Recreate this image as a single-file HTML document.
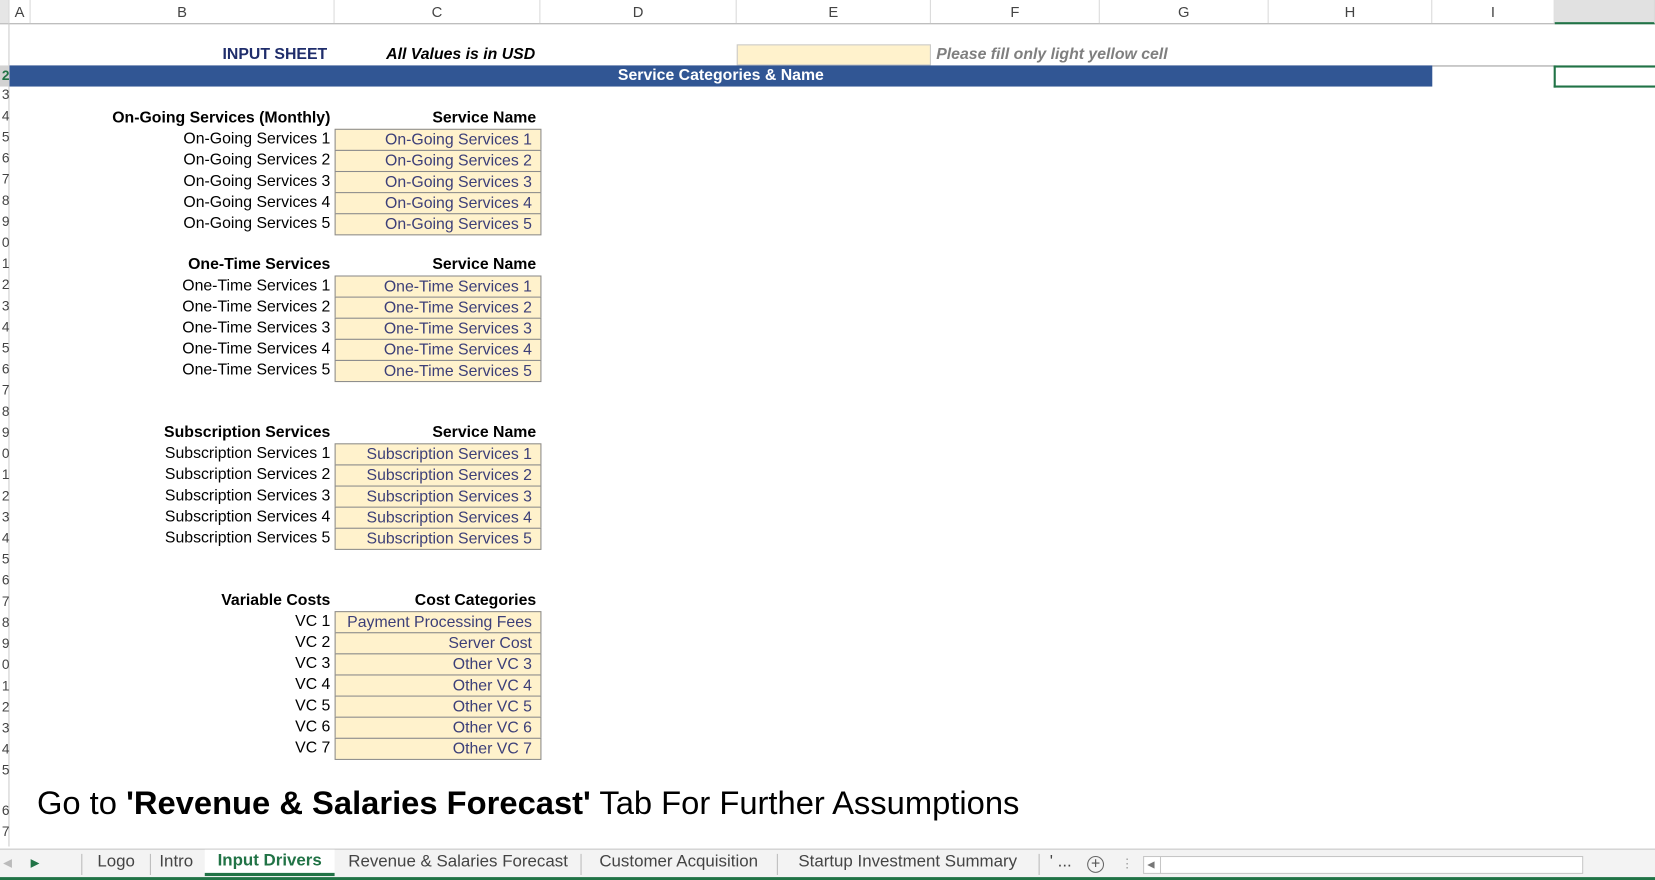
<!DOCTYPE html>
<html><head><meta charset="utf-8"><style>
html,body{margin:0;padding:0;background:#fff;overflow:hidden;width:1655px;height:880px}
#w{position:absolute;left:0;top:0;width:1568px;height:834px;transform:scale(1.05548);transform-origin:0 0;font-family:"Liberation Sans",Arial,sans-serif;color:#000}
.a{position:absolute;white-space:nowrap;font-size:15px;line-height:20px}
.r{text-align:right}
.b{font-weight:bold}
.y{position:absolute;background:#FFF2CC;border:1px solid #8c8c8c;box-sizing:border-box;height:21px;color:#3c3f78;font-size:15px;line-height:19px;text-align:right;padding-right:8px;white-space:nowrap}
.h{position:absolute;top:0;height:22px;line-height:22px;font-size:14px;color:#444;text-align:center;border-right:1px solid #dadada;box-sizing:border-box}
.rn{position:absolute;left:0;width:9px;font-size:13px;color:#444;overflow:hidden;text-align:right;direction:rtl}
.tab{position:absolute;top:805px;height:26px;line-height:24px;font-size:16px;color:#444;text-align:center}
.sep{position:absolute;top:809px;width:1px;height:20px;background:#bbb}
</style></head><body><div id="w">
<div style="position:absolute;left:0;top:0;width:1568px;height:22px;background:#fff;border-bottom:1px solid #ababab"></div>
<div class="h" style="left:0;width:9px;background:#e6e6e6"></div>
<div class="h" style="left:9px;width:20px">A</div>
<div class="h" style="left:29px;width:288px">B</div>
<div class="h" style="left:317px;width:195px">C</div>
<div class="h" style="left:512px;width:186px">D</div>
<div class="h" style="left:698px;width:184px">E</div>
<div class="h" style="left:882px;width:160px">F</div>
<div class="h" style="left:1042px;width:160px">G</div>
<div class="h" style="left:1202px;width:155px">H</div>
<div class="h" style="left:1357px;width:116px">I</div>
<div class="h" style="left:1473px;width:95px;background:#e1e1e1;border-bottom:2px solid #217346;height:23px"></div>
<div style="position:absolute;left:8px;top:22px;width:1px;height:780px;background:#ccc"></div>
<div class="a b r" style="left:29px;width:281px;top:42px;color:#1f2d6b">INPUT SHEET</div>
<div class="a b r" style="left:317px;width:190px;top:42px;font-style:italic">All Values is in USD</div>
<div style="position:absolute;left:698px;top:42px;width:184px;height:20px;background:#FFF2CC;border:1px solid #c9c9c9;box-sizing:border-box"></div>
<div class="a b" style="left:887px;top:42px;font-style:italic;color:#7f7f7f">Please fill only light yellow cell</div>
<div style="position:absolute;left:9px;top:62px;width:1559px;height:1px;background:#9e9e9e"></div>
<div class="a b" style="left:9px;top:62px;width:1348px;height:20px;background:#315694;color:#fff;text-align:center">Service Categories &amp; Name</div>
<div style="position:absolute;left:1472px;top:62px;width:96px;height:21px;border:2px solid #217346;border-right:none;box-sizing:border-box"></div>
<div class="rn b" style="top:62px;color:#217346;background:#d2d2d2;line-height:20px">2</div>
<div class="rn" style="top:82px">3</div><div class="rn" style="top:102px">4</div><div class="rn" style="top:122px">5</div><div class="rn" style="top:142px">6</div><div class="rn" style="top:162px">7</div><div class="rn" style="top:182px">8</div><div class="rn" style="top:202px">9</div><div class="rn" style="top:222px">0</div><div class="rn" style="top:242px">1</div><div class="rn" style="top:262px">2</div><div class="rn" style="top:282px">3</div><div class="rn" style="top:302px">4</div><div class="rn" style="top:322px">5</div><div class="rn" style="top:342px">6</div><div class="rn" style="top:362px">7</div><div class="rn" style="top:382px">8</div><div class="rn" style="top:402px">9</div><div class="rn" style="top:422px">0</div><div class="rn" style="top:442px">1</div><div class="rn" style="top:462px">2</div><div class="rn" style="top:482px">3</div><div class="rn" style="top:502px">4</div><div class="rn" style="top:522px">5</div><div class="rn" style="top:542px">6</div><div class="rn" style="top:562px">7</div><div class="rn" style="top:582px">8</div><div class="rn" style="top:602px">9</div><div class="rn" style="top:622px">0</div><div class="rn" style="top:642px">1</div><div class="rn" style="top:662px">2</div><div class="rn" style="top:682px">3</div><div class="rn" style="top:702px">4</div><div class="rn" style="top:722px">5</div><div class="rn" style="top:760px">6</div><div class="rn" style="top:780px">7</div>

<div class="a b r" style="left:29px;width:284px;top:102px">On-Going Services (Monthly)</div>
<div class="a b r" style="left:317px;width:191px;top:102px">Service Name</div>
<div class="a r" style="left:29px;width:284px;top:122px">On-Going Services 1</div><div class="y" style="left:317px;width:196px;top:122px">On-Going Services 1</div>
<div class="a r" style="left:29px;width:284px;top:142px">On-Going Services 2</div><div class="y" style="left:317px;width:196px;top:142px">On-Going Services 2</div>
<div class="a r" style="left:29px;width:284px;top:162px">On-Going Services 3</div><div class="y" style="left:317px;width:196px;top:162px">On-Going Services 3</div>
<div class="a r" style="left:29px;width:284px;top:182px">On-Going Services 4</div><div class="y" style="left:317px;width:196px;top:182px">On-Going Services 4</div>
<div class="a r" style="left:29px;width:284px;top:202px">On-Going Services 5</div><div class="y" style="left:317px;width:196px;top:202px">On-Going Services 5</div>
<div class="a b r" style="left:29px;width:284px;top:241px">One-Time Services</div>
<div class="a b r" style="left:317px;width:191px;top:241px">Service Name</div>
<div class="a r" style="left:29px;width:284px;top:261px">One-Time Services 1</div><div class="y" style="left:317px;width:196px;top:261px">One-Time Services 1</div>
<div class="a r" style="left:29px;width:284px;top:281px">One-Time Services 2</div><div class="y" style="left:317px;width:196px;top:281px">One-Time Services 2</div>
<div class="a r" style="left:29px;width:284px;top:301px">One-Time Services 3</div><div class="y" style="left:317px;width:196px;top:301px">One-Time Services 3</div>
<div class="a r" style="left:29px;width:284px;top:321px">One-Time Services 4</div><div class="y" style="left:317px;width:196px;top:321px">One-Time Services 4</div>
<div class="a r" style="left:29px;width:284px;top:341px">One-Time Services 5</div><div class="y" style="left:317px;width:196px;top:341px">One-Time Services 5</div>
<div class="a b r" style="left:29px;width:284px;top:400px">Subscription Services</div>
<div class="a b r" style="left:317px;width:191px;top:400px">Service Name</div>
<div class="a r" style="left:29px;width:284px;top:420px">Subscription Services 1</div><div class="y" style="left:317px;width:196px;top:420px">Subscription Services 1</div>
<div class="a r" style="left:29px;width:284px;top:440px">Subscription Services 2</div><div class="y" style="left:317px;width:196px;top:440px">Subscription Services 2</div>
<div class="a r" style="left:29px;width:284px;top:460px">Subscription Services 3</div><div class="y" style="left:317px;width:196px;top:460px">Subscription Services 3</div>
<div class="a r" style="left:29px;width:284px;top:480px">Subscription Services 4</div><div class="y" style="left:317px;width:196px;top:480px">Subscription Services 4</div>
<div class="a r" style="left:29px;width:284px;top:500px">Subscription Services 5</div><div class="y" style="left:317px;width:196px;top:500px">Subscription Services 5</div>
<div class="a b r" style="left:29px;width:284px;top:559px">Variable Costs</div>
<div class="a b r" style="left:317px;width:191px;top:559px">Cost Categories</div>
<div class="a r" style="left:29px;width:284px;top:579px">VC 1</div><div class="y" style="left:317px;width:196px;top:579px">Payment Processing Fees</div>
<div class="a r" style="left:29px;width:284px;top:599px">VC 2</div><div class="y" style="left:317px;width:196px;top:599px">Server Cost</div>
<div class="a r" style="left:29px;width:284px;top:619px">VC 3</div><div class="y" style="left:317px;width:196px;top:619px">Other VC 3</div>
<div class="a r" style="left:29px;width:284px;top:639px">VC 4</div><div class="y" style="left:317px;width:196px;top:639px">Other VC 4</div>
<div class="a r" style="left:29px;width:284px;top:659px">VC 5</div><div class="y" style="left:317px;width:196px;top:659px">Other VC 5</div>
<div class="a r" style="left:29px;width:284px;top:679px">VC 6</div><div class="y" style="left:317px;width:196px;top:679px">Other VC 6</div>
<div class="a r" style="left:29px;width:284px;top:699px">VC 7</div><div class="y" style="left:317px;width:196px;top:699px">Other VC 7</div>
<div class="a" style="left:35px;top:741px;font-size:31px;line-height:40px">Go to <b>'Revenue &amp; Salaries Forecast'</b> Tab For Further Assumptions</div>
<div style="position:absolute;left:0;top:804px;width:1568px;height:30px;background:#f3f3f3;border-top:1px solid #c6c6c6;box-sizing:border-box"></div>
<div style="position:absolute;left:0;top:831px;width:1568px;height:3px;background:#217346"></div>
<div class="a" style="left:3px;top:808px;color:#bbb;font-size:11px">◀</div>
<div class="a" style="left:29px;top:808px;color:#217346;font-size:11px">▶</div>
<div class="sep" style="left:77px"></div>
<div class="tab" style="left:78px;width:64px">Logo</div>
<div class="sep" style="left:142px"></div>
<div class="tab" style="left:142px;width:50px">Intro</div>
<div class="tab" style="left:194px;width:123px;background:#fff;color:#217346;font-weight:bold;border-bottom:3px solid #217346;height:25px;top:805px;box-sizing:border-box;line-height:22px">Input Drivers</div>
<div class="tab" style="left:318px;width:232px">Revenue &amp; Salaries Forecast</div>
<div class="sep" style="left:550px"></div>
<div class="tab" style="left:550px;width:186px">Customer Acquisition</div>
<div class="sep" style="left:736px"></div>
<div class="tab" style="left:737px;width:246px">Startup Investment Summary</div>
<div class="sep" style="left:984px"></div>
<div class="tab" style="left:990px;width:30px">' ...</div>
<div style="position:absolute;left:1030px;top:811px;width:16px;height:16px;border:1px solid #666;border-radius:50%;box-sizing:border-box;text-align:center;line-height:13px;font-size:15px;color:#555">+</div>
<div class="a" style="left:1062px;top:808px;color:#999;font-size:12px">⋮</div>
<div style="position:absolute;left:1083px;top:811px;width:417px;height:17px;background:#fff;border:1px solid #c6c6c6;box-sizing:border-box"></div>
<div style="position:absolute;left:1099px;top:811px;width:1px;height:17px;background:#c6c6c6"></div>
<div class="a" style="left:1087px;top:809px;font-size:9px;color:#777">◀</div>
</div></body></html>
